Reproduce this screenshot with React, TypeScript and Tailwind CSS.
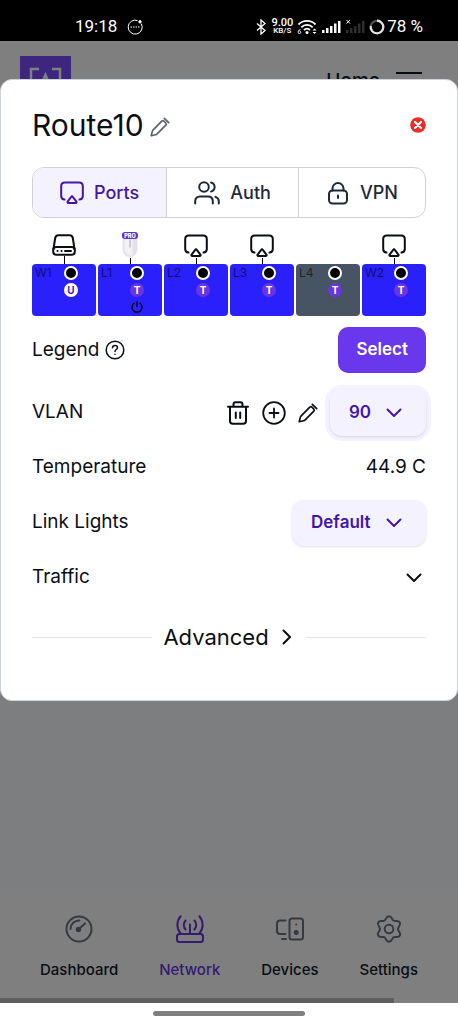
import { useState } from 'react'
import type { ReactNode } from 'react'

type IconProps = { className?: string }

function PortsIcon({ className }: IconProps) {
  return (
    <svg
      viewBox="0 0 24 24"
      fill="none"
      stroke="currentColor"
      strokeWidth="2"
      strokeLinecap="round"
      strokeLinejoin="round"
      className={className}
    >
      <path d="M4.5 18.6C2.6 18.4 1.2 17.2 1.2 15V5.2C1.2 3 2.6 1.6 4.8 1.6h14.4c2.2 0 3.6 1.4 3.6 3.6V15c0 2.2-1.4 3.4-3.3 3.6" />
      <path d="M11.2 15.8 7.6 20.6c-.4.7-.1 1.4.7 1.4h7.4c.8 0 1.1-.7.7-1.4l-3.6-4.8c-.4-.6-1.2-.6-1.6 0Z" />
    </svg>
  )
}

function UsersIcon({ className }: IconProps) {
  return (
    <svg
      viewBox="0 0 26 24"
      fill="none"
      stroke="currentColor"
      strokeWidth="2"
      strokeLinecap="round"
      strokeLinejoin="round"
      className={className}
    >
      <circle cx="10" cy="6" r="4.8" />
      <path d="M1.2 22.5v-2.2c0-3 2-4.8 4.8-4.8h8c2.800 0 4.800 1.800 4.800 4.800v2.200" />
      <path d="M17 1.400c2.200.5 3.600 2.400 3.600 4.600s-1.400 4-3.600 4.600M21.400 15.900c2.200.7 3.400 2.300 3.400 4.400v2.200" />
    </svg>
  )
}

function LockIcon({ className }: IconProps) {
  return (
    <svg
      viewBox="0 0 24 24"
      fill="none"
      stroke="currentColor"
      strokeWidth="2"
      strokeLinecap="round"
      strokeLinejoin="round"
      className={className}
    >
      <rect x="3" y="9.500" width="18" height="13" rx="3.500" />
      <path d="M6.500 9.500V7.500a5.500 5.500 0 0 1 11 0v2M12 14.500v2.500" />
    </svg>
  )
}

function PencilIcon({ className }: IconProps) {
  return (
    <svg
      viewBox="0 0 20 20"
      fill="none"
      stroke="currentColor"
      strokeWidth="1.700"
      strokeLinecap="round"
      strokeLinejoin="round"
      className={className}
    >
      <path d="M11.800 4.200 3.200 12.800c-.5.500-.8 1-.9 1.600L1.200 18.800l4.400-1.100c.6-.1 1.100-.4 1.600-.9l8.600-8.600a1.500 1.500 0 0 0 0-2.100l-1.900-1.900a1.500 1.500 0 0 0-2.100 0Z" />
      <path d="m14.300 1.300 4.400 4.400" />
    </svg>
  )
}

function ModemIcon({ className }: IconProps) {
  return (
    <svg
      viewBox="0 0 24 22"
      fill="none"
      stroke="currentColor"
      strokeWidth="2"
      strokeLinecap="round"
      strokeLinejoin="round"
      className={className}
    >
      <path d="M1.500 15 3.200 4C3.500 2.200 4.600 1.200 6.400 1.200h11.200c1.800 0 2.900 1 3.200 2.800l1.700 11" />
      <rect x="1.200" y="13" width="21.600" height="7.800" rx="3" />
      <path d="M5.500 17h.1M9.500 17h.1M13 17h6" />
    </svg>
  )
}

function AccessPointIcon({ className }: IconProps) {
  return (
    <svg viewBox="0 0 18 26" className={className}>
      <path d="M1.500 5h15v12.500a7.500 7.500 0 0 1-15 0Z" fill="#e4e2e8" />
      <path d="M3.500 6h8v17a6 6 0 0 1-8-5.500Z" fill="#f3f2f5" />
      <path d="M9 7.500v8" stroke="#a5a3aa" strokeWidth="1" />
      <rect x="1" y="0" width="16" height="7" rx="3" fill="#6330c9" />
      <text
        x="9"
        y="5.500"
        textAnchor="middle"
        fill="#ffffff"
        fontFamily="Inter, sans-serif"
        fontWeight="800"
        fontSize="5.500"
      >
        PRO
      </text>
    </svg>
  )
}

function PowerIcon({ className }: IconProps) {
  return (
    <svg
      viewBox="0 0 12 12"
      fill="none"
      stroke="currentColor"
      strokeWidth="1.300"
      strokeLinecap="round"
      className={className}
    >
      <path d="M3 2.200a5 5 0 1 0 6 0M6 .8v4.700" />
    </svg>
  )
}

function HelpIcon({ className }: IconProps) {
  return (
    <svg
      viewBox="0 0 20 20"
      fill="none"
      stroke="currentColor"
      strokeWidth="1.500"
      strokeLinecap="round"
      strokeLinejoin="round"
      className={className}
    >
      <circle cx="10" cy="10" r="8.800" />
      <path d="M7.500 7.700C7.600 6.300 8.600 5.500 10 5.500s2.500.9 2.500 2.200c0 1.700-2.500 1.900-2.500 3.700M10 14.200v.1" />
    </svg>
  )
}

function TrashIcon({ className }: IconProps) {
  return (
    <svg
      viewBox="0 0 24 24"
      fill="none"
      stroke="currentColor"
      strokeWidth="2"
      strokeLinecap="round"
      strokeLinejoin="round"
      className={className}
    >
      <path d="M2 5.800h20M4 6v14c0 1.800 1 2.800 2.800 2.800h10.400c1.800 0 2.800-1 2.800-2.800V6M7.500 5.500V3.200c0-1.200.8-2 2-2h5c1.200 0 2 .8 2 2v2.300M9.800 11.500v5.500M14.200 11.500v5.500" />
    </svg>
  )
}

function PlusCircleIcon({ className }: IconProps) {
  return (
    <svg
      viewBox="0 0 24 24"
      fill="none"
      stroke="currentColor"
      strokeWidth="1.800"
      strokeLinecap="round"
      className={className}
    >
      <circle cx="12" cy="12" r="10.800" />
      <path d="M12 7.500v9M7.500 12h9" />
    </svg>
  )
}

function ChevronIcon({ className }: IconProps) {
  return (
    <svg
      viewBox="0 0 16 16"
      fill="none"
      stroke="currentColor"
      strokeWidth="2"
      strokeLinecap="round"
      strokeLinejoin="round"
      className={className}
    >
      <path d="m1.500 4.500 6.500 6.500 6.500-6.500" />
    </svg>
  )
}

function CloseIcon({ className }: IconProps) {
  return (
    <svg viewBox="0 0 16 16" className={className}>
      <circle cx="8" cy="8" r="7.800" fill="#ea2b2b" />
      <path
        d="m5 5 6 6M11 5l-6 6"
        stroke="#ffffff"
        strokeWidth="2.200"
        strokeLinecap="round"
      />
    </svg>
  )
}

function GaugeIcon({ className }: IconProps) {
  return (
    <svg
      viewBox="0 0 28 28"
      fill="none"
      stroke="currentColor"
      strokeWidth="2"
      strokeLinecap="round"
      className={className}
    >
      <circle cx="14" cy="14" r="12.500" />
      <path d="M5.500 14a8.500 8.500 0 0 1 9-8.500M14 14l6-5.500" />
      <circle cx="13.500" cy="14.500" r="1.700" fill="currentColor" />
    </svg>
  )
}

function RouterIcon({ className }: IconProps) {
  return (
    <svg
      viewBox="0 0 28 28"
      fill="none"
      stroke="currentColor"
      strokeWidth="2"
      strokeLinecap="round"
      strokeLinejoin="round"
      className={className}
    >
      <rect x="1" y="19" width="26" height="8" rx="2.500" />
      <path d="M14 9.500V19M9.600 5.500c-2.400 2.500-2.400 6.500 0 9M18.400 5.500c2.400 2.500 2.400 6.500 0 9M4.600 18.500C.4 13.500.2 6.800 4.600 1.200M23.400 18.500c4.200-5 4.400-11.700 0-17.300" />
    </svg>
  )
}

function DevicesIcon({ className }: IconProps) {
  return (
    <svg
      viewBox="0 0 28 28"
      fill="none"
      stroke="currentColor"
      strokeWidth="2"
      strokeLinecap="round"
      strokeLinejoin="round"
      className={className}
    >
      <path d="M9.500 5.500H4.200C2 5.500 1 6.500 1 8.700v7C1 18 2 19 4.200 19h5.300M6 24h4" />
      <rect x="13.500" y="3.500" width="13.500" height="21" rx="2.500" />
      <circle cx="20.200" cy="17.500" r="1.500" fill="currentColor" />
      <path d="M20.200 9.500v.1" />
    </svg>
  )
}

function GearIcon({ className }: IconProps) {
  return (
    <svg
      viewBox="0 0 28 28"
      fill="none"
      stroke="currentColor"
      strokeWidth="2"
      strokeLinejoin="round"
      className={className}
    >
      <path d="M14 1.200c2.300 0 2.600 1.500 3.300 3 .6 1.400 1.700 2 3.200 1.800 1.700-.2 3.200-.6 4.300 1.400s0 3-1 4.300c-.9 1.300-.9 3.300 0 4.600 1 1.300 2.100 2.300 1 4.300s-2.600 1.600-4.300 1.400c-1.500-.2-2.600.4-3.200 1.800-.7 1.500-1 3-3.300 3s-2.600-1.500-3.300-3c-.6-1.400-1.700-2-3.200-1.800-1.700.2-3.200.6-4.300-1.400s0-3 1-4.300c.9-1.300.9-3.300 0-4.600-1-1.300-2.100-2.300-1-4.300s2.600-1.600 4.300-1.400c1.500.2 2.600-.4 3.200-1.800.7-1.500 1-3 3.300-3Z" />
      <circle cx="14" cy="14" r="4.300" />
    </svg>
  )
}

function StatusBar() {
  return (
    <div className="flex h-[41px] items-center justify-between bg-black pt-3 pr-[35px] pl-[75px] font-[Roboto,sans-serif] text-[17px] text-white">
      <div className="flex items-center gap-[10px]">
        <span>19:18</span>
        <svg
          viewBox="0 0 16 16"
          fill="none"
          stroke="currentColor"
          className="size-4"
        >
          <path d="M14.300 4.700A7 7 0 1 1 10.500 1.500" />
          <path d="M3.500 8h9" strokeDasharray="1.500 1" />
          <circle cx="13" cy="2.800" r="1.200" fill="currentColor" />
        </svg>
      </div>
      <div className="flex items-center gap-1">
        <svg
          viewBox="0 0 12 16"
          fill="none"
          stroke="currentColor"
          strokeWidth="1.300"
          className="h-4 w-3"
        >
          <path d="m2 4.500 8 7-4 3.500V1l4 3.500-8 7" />
        </svg>
        <div className="flex flex-col items-center font-medium">
          <span className="text-[11px] leading-[9px]">9.00</span>
          <span className="text-[8px] leading-[8px]">KB/S</span>
        </div>
        <svg viewBox="0 0 20 16" fill="none" className="h-4 w-5">
          <path
            d="M1.500 5.500a12 12 0 0 1 17 0M4.300 8.300a8 8 0 0 1 11.400 0M7 11a4.500 4.500 0 0 1 6 0"
            stroke="currentColor"
            strokeWidth="1.800"
          />
          <circle cx="10" cy="13.500" r="1.500" fill="currentColor" />
          <path
            d="M3.500 10.300C1.600 11 1.200 12 1.200 13.300a1.300 1.300 0 1 0 .4-1"
            stroke="currentColor"
            strokeWidth=".9"
          />
          <path d="m15.500 11.500 2-2 2 2ZM15.500 13l2 2 2-2Z" fill="currentColor" />
        </svg>
        <svg viewBox="0 0 20 14" fill="currentColor" className="h-[14px] w-5">
          <path d="M1 10h2.500v3H1ZM5 8h2.500v5H5ZM9 6h2.500v7H9ZM13 3.500h2.500V13H13ZM17 1h2.500v12H17Z" />
        </svg>
        <svg viewBox="0 0 20 16" className="h-4 w-5">
          <path
            d="M1 11h2.500v3H1ZM5 9h2.500v5H5ZM9 7h2.500v7H9ZM13 4.500h2.500V14H13ZM17 2h2.500v12H17Z"
            fill="#2e2e2e"
          />
          <path d="m1.500 1 3.500 3.500M5 1 1.500 4.500" stroke="currentColor" />
        </svg>
        <div className="flex items-center gap-[2px]">
          <svg viewBox="0 0 16 16" fill="none" className="size-4">
            <circle cx="8" cy="8" r="6.300" stroke="#555555" strokeWidth="2" />
            <path
              d="M8 1.700A6.300 6.300 0 1 1 1.800 7"
              stroke="#e5e5e5"
              strokeWidth="2.200"
            />
          </svg>
          <span className="whitespace-nowrap">78 %</span>
        </div>
      </div>
    </div>
  )
}

type Port = {
  name: string
  badge: 'U' | 'T'
  up: boolean
  device: 'modem' | 'pro' | 'ap' | null
  power?: boolean
}

const ports: Port[] = [
  { name: 'W1', badge: 'U', up: true, device: 'modem' },
  { name: 'L1', badge: 'T', up: true, device: 'pro', power: true },
  { name: 'L2', badge: 'T', up: true, device: 'ap' },
  { name: 'L3', badge: 'T', up: true, device: 'ap' },
  { name: 'L4', badge: 'T', up: false, device: null },
  { name: 'W2', badge: 'T', up: true, device: 'ap' },
]

function PortCell({ port }: { port: Port }) {
  return (
    <div className="flex flex-col">
      <div className="flex h-8 flex-col items-center">
        {port.device === 'modem' && (
          <ModemIcon className="mt-[2px] h-[22px] w-6 shrink-0" />
        )}
        {port.device === 'pro' && (
          <AccessPointIcon className="h-[26px] w-[18px] shrink-0" />
        )}
        {port.device === 'ap' && (
          <PortsIcon className="mt-[2px] size-6 shrink-0" />
        )}
        {port.device && <span className="w-px grow bg-black" />}
      </div>
      <button
        type="button"
        className={`relative flex h-[52px] flex-col items-center rounded-[4px] pt-[2px] pl-[14px] ${port.up ? 'bg-[#2a20fb]' : 'bg-[#475463]'}`}
      >
        <span className="absolute top-[1px] left-[3px] text-xs text-black/60">
          {port.name}
        </span>
        <span className="relative size-[14px] rounded-full border-2 border-white bg-black" />
        <span
          className={`mt-[3px] flex size-[14px] items-center justify-center rounded-full text-[10px] leading-[14px] font-bold ${port.badge === 'U' ? 'bg-white text-[#4c1fb5]' : 'bg-[#6a35e0] text-white'}`}
        >
          {port.badge}
        </span>
        {port.power && <PowerIcon className="mt-1 size-3 text-black" />}
      </button>
    </div>
  )
}

const tabs = [
  { name: 'Ports', icon: <PortsIcon className="size-6" /> },
  { name: 'Auth', icon: <UsersIcon className="h-6 w-[26px]" /> },
  { name: 'VPN', icon: <LockIcon className="size-6" /> },
]

function Row({ children }: { children: ReactNode }) {
  return (
    <div className="flex h-[55px] items-center justify-between">{children}</div>
  )
}

function SoftSelect({
  label,
  options,
  className,
}: {
  label: string
  options: string[]
  className: string
}) {
  return (
    <div className="relative text-[#4316a8]">
      <select
        aria-label={label}
        className={`block h-[46px] appearance-none rounded-xl bg-[#f5f2ff] pl-[19px] text-[17px] font-semibold shadow-sm outline-none ${className}`}
      >
        {options.map((option) => (
          <option key={option}>{option}</option>
        ))}
      </select>
      <ChevronIcon className="pointer-events-none absolute top-[15px] right-6 size-4" />
    </div>
  )
}

function RouteDialog() {
  const [tab, setTab] = useState('Ports')

  return (
    <section
      role="dialog"
      aria-label="Route10"
      className="absolute inset-x-0 top-[38px] rounded-xl border border-[#cfd3da] bg-white px-[31px] pt-[27px] pb-[41px] text-[#0b0e14]"
    >
      <div className="flex h-9 items-center justify-between">
        <div className="flex items-center gap-[6px]">
          <h1 className="text-[30px] leading-9">Route10</h1>
          <button type="button" aria-label="Rename" className="text-[#5b6270]">
            <PencilIcon className="mt-1 size-5" />
          </button>
        </div>
        <button type="button" aria-label="Close">
          <CloseIcon className="size-4" />
        </button>
      </div>

      <div className="mt-6 flex h-[51px] overflow-hidden rounded-xl border border-[#cfd1d6]">
        {tabs.map(({ name, icon }) => (
          <button
            key={name}
            type="button"
            onClick={() => setTab(name)}
            className={`flex flex-auto items-center justify-center gap-[10px] border-r border-[#cfd1d6] text-lg font-medium last:border-r-0 ${tab === name ? 'bg-[#f5f2ff] text-[#4316a8]' : 'text-[#1f2937]'}`}
          >
            {icon}
            {name}
          </button>
        ))}
      </div>

      <div className="mt-[14px] grid grid-cols-6 gap-[2px]">
        {ports.map((port) => (
          <PortCell key={port.name} port={port} />
        ))}
      </div>

      <div className="mt-[11px] mb-3 flex items-center justify-between text-[19px]">
        <div className="flex items-center gap-[6px]">
          Legend
          <button type="button" aria-label="About the legend">
            <HelpIcon className="size-5" />
          </button>
        </div>
        <button
          type="button"
          className="h-[46px] rounded-[10px] bg-[#6a38ec] px-[18px] text-[17px] font-semibold text-white"
        >
          Select
        </button>
      </div>

      <div className="text-[19px]">
        <Row>
          VLAN
          <div className="flex items-center">
            <button type="button" aria-label="Delete VLAN" className="mr-3">
              <TrashIcon className="size-6" />
            </button>
            <button type="button" aria-label="Add VLAN" className="mr-3">
              <PlusCircleIcon className="size-6" />
            </button>
            <button type="button" aria-label="Edit VLAN" className="mr-3">
              <PencilIcon className="size-5" />
            </button>
            <div className="rounded-xl ring-[5px] ring-[#f5f2ff]">
              <SoftSelect
                label="VLAN"
                options={['90', '1', '10']}
                className="w-24"
              />
            </div>
          </div>
        </Row>
        <Row>
          Temperature
          <span>44.9 C</span>
        </Row>
        <Row>
          Link Lights
          <SoftSelect
            label="Link Lights"
            options={['Default', 'On', 'Off']}
            className="w-[134px]"
          />
        </Row>
        <Row>
          Traffic
          <button type="button" aria-label="Show traffic" className="mr-1">
            <ChevronIcon className="size-4" />
          </button>
        </Row>
      </div>

      <div className="mt-[10px] flex h-11 items-center gap-[11px]">
        <span className="h-px flex-1 bg-[#e5e7eb]" />
        <button type="button" className="flex items-center gap-[10px] text-[22px]">
          Advanced
          <ChevronIcon className="size-4 -rotate-90" />
        </button>
        <span className="h-px flex-1 bg-[#e5e7eb]" />
      </div>
    </section>
  )
}

const navItems = [
  { name: 'Dashboard', icon: <GaugeIcon className="size-7" /> },
  { name: 'Network', icon: <RouterIcon className="size-7" />, active: true },
  { name: 'Devices', icon: <DevicesIcon className="size-7" /> },
  { name: 'Settings', icon: <GearIcon className="size-7" /> },
]

export default function App() {
  return (
    <div className="flex min-h-screen flex-col bg-white font-[Inter,sans-serif]">
      <StatusBar />

      <div className="relative flex flex-1 flex-col bg-[#fbfcfe]">
        <header className="flex h-20 items-center justify-between bg-white pr-9 pl-5">
          <svg viewBox="0 0 51 51" fill="none" className="size-[51px]">
            <path d="M0 0h51v51H0Z" fill="#7c4dff" />
            <path
              d="M19 13h-8v25h8M32 13h8v25h-8M19 34l6.500-15L32 34"
              stroke="#ffffff"
              strokeWidth="2.500"
            />
          </svg>
          <div className="flex items-center gap-4 text-[19px] font-medium text-[#111827]">
            Home
            <span className="flex flex-col gap-[6px]">
              <span className="h-[2px] w-[26px] bg-current" />
              <span className="h-[2px] w-[26px] bg-current" />
              <span className="h-[2px] w-[26px] bg-current" />
            </span>
          </div>
        </header>

        <main className="flex-1" />

        <nav className="flex h-[115px] justify-between bg-white px-10 pt-[27px]">
          {navItems.map(({ name, icon, active }) => (
            <a
              key={name}
              href="#"
              className={`flex flex-col items-center gap-[15px] text-[15px] leading-6 font-medium ${active ? 'text-[#6a35e0]' : 'text-[#111827]'}`}
            >
              <span className={active ? '' : 'text-[#6b7280]'}>{icon}</span>
              {name}
            </a>
          ))}
        </nav>

        <div className="absolute inset-0 bg-black/50" />
        <span className="absolute bottom-0 left-0 h-[5px] w-[86%] bg-[#5e5e5e]" />
        <RouteDialog />
      </div>

      <div className="flex h-[21px] items-center justify-center bg-white">
        <span className="h-[5px] w-1/3 rounded-full bg-[#7f7f7f]" />
      </div>
    </div>
  )
}
